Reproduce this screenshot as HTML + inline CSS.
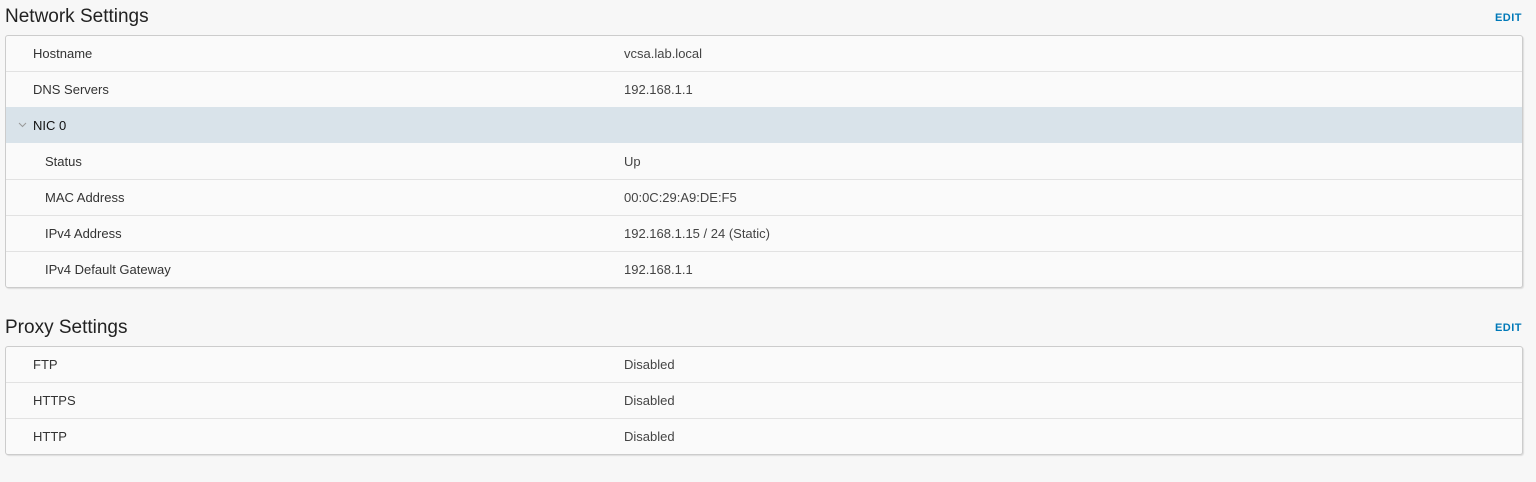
<!DOCTYPE html>
<html><head><style>
body{margin:0;width:1536px;height:482px;background:#f7f7f7;font-family:"Liberation Sans",sans-serif;color:#333;position:relative;overflow:hidden}
.h{position:absolute;left:5px;font-size:19px;color:#222}
.e{position:absolute;right:14px;font-size:11px;color:#0079b8;letter-spacing:.5px;font-weight:bold}
.t{position:absolute;left:5px;width:1518px;border:1px solid #ccc;border-radius:3px;background:#fafafa;box-sizing:border-box;box-shadow:1px 1px 1px #ddd}
.r{height:36px;border-top:1px solid #e2e2e2;box-sizing:border-box;position:relative;font-size:13px;line-height:35px}
.r:first-child{border-top:none;height:35px}
.l{position:absolute;left:27px}
.s .l{left:39px}
.v{position:absolute;left:618px;color:#444}
.n{background:#d9e3ea;border-top:1px solid #d9e3ea}
.n .l{color:#111}
</style></head><body>
<div class="h" style="top:6px">Network Settings</div>
<div class="e" style="top:12px">EDIT</div>
<div class="t" style="top:35px;height:253px">
<div class="r"><span class="l">Hostname</span><span class="v">vcsa.lab.local</span></div>
<div class="r"><span class="l">DNS Servers</span><span class="v">192.168.1.1</span></div>
<div class="r n"><svg style="position:absolute;left:12px;top:14px" width="9" height="6"><path d="M1 1L4.5 4.5L8 1" stroke="#999" fill="none"/></svg><span class="l">NIC 0</span></div>
<div class="r s" style="border-top:1px solid #fafafa"><span class="l">Status</span><span class="v">Up</span></div>
<div class="r s"><span class="l">MAC Address</span><span class="v">00:0C:29:A9:DE:F5</span></div>
<div class="r s"><span class="l">IPv4 Address</span><span class="v">192.168.1.15 / 24 (Static)</span></div>
<div class="r s"><span class="l">IPv4 Default Gateway</span><span class="v">192.168.1.1</span></div>
</div>
<div class="h" style="top:317px">Proxy Settings</div>
<div class="e" style="top:322px">EDIT</div>
<div class="t" style="top:346px;height:109px">
<div class="r"><span class="l">FTP</span><span class="v">Disabled</span></div>
<div class="r"><span class="l">HTTPS</span><span class="v">Disabled</span></div>
<div class="r"><span class="l">HTTP</span><span class="v">Disabled</span></div>
</div>
</body></html>
